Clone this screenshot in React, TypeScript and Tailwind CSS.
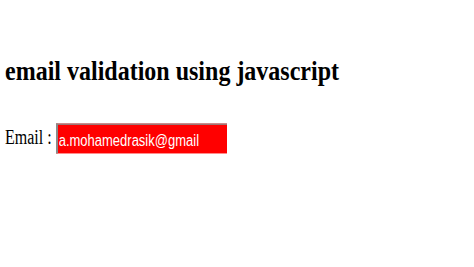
export default function App() {
  return (
    <div className="w-[474px] h-[267px] bg-white overflow-hidden pl-[5px] pt-[57px]">
      <h1 className="font-['Liberation_Serif',serif] font-bold text-[24px] leading-[28px] text-black whitespace-nowrap scale-y-[1.15] origin-left">
        email validation using javascript
      </h1>
      <div className="mt-[41px] flex items-center font-['Liberation_Serif',serif] text-[16px] text-black">
        <span className="scale-y-[1.25]">Email :</span>
        <input
          readOnly
          value="a.mohamedrasik@gmail"
          className="ml-[4px] w-[171px] h-[23px] scale-y-[1.3] bg-[#ff0000] text-white font-['Liberation_Sans',sans-serif] text-[13px] pl-[1px] pr-0 pt-[1px] border-t-[1.5px] border-l-2 border-[#8a8a8a] border-r-0 border-b-0 outline-none"
        />
      </div>
    </div>
  );
}
